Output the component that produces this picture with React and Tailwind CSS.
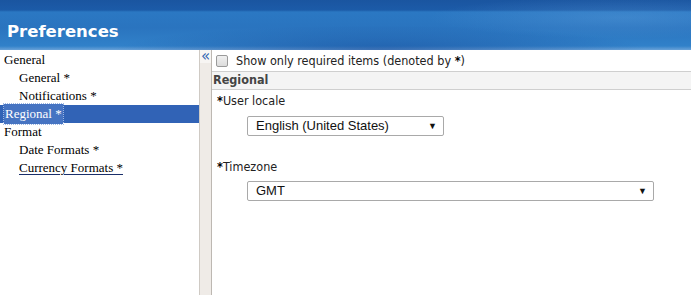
import React from 'react';

// Preferences page: header, navigation tree, splitter, form panel

const treeItems = [
  { label: 'General', level: 0 },
  { label: 'General *', level: 1 },
  { label: 'Notifications *', level: 1 },
  { label: 'Regional *', level: 0, selected: true },
  { label: 'Format', level: 0 },
  { label: 'Date Formats *', level: 1 },
  { label: 'Currency Formats *', level: 1, underline: true },
];

const Select = ({ value, width }) => (
  <div
    className={`flex items-center justify-between h-[20px] ${width} border border-[#a9a9a9] rounded-[2px] bg-white pl-[8px] pr-[6px] text-[13px] text-[#111] font-['Liberation_Sans',Arial,sans-serif]`}
  >
    <span>{value}</span>
    <span className="text-[9px] leading-none">▼</span>
  </div>
);

export default function App() {
  return (
    <div className="w-[691px] h-[295px] overflow-hidden flex flex-col bg-white">
      {/* Header */}
      <div className="relative h-[50px] shrink-0 flex items-end pb-[10px] pl-[7px] bg-[linear-gradient(to_bottom,#1a55a0_0%,#1c5ba8_20%,#2b78c3_24%,#2a74bf_55%,#3181c9_92%,#6aa2d8_100%)]">
        <div className="absolute inset-0 bg-[radial-gradient(ellipse_55%_70%_at_55%_100%,rgba(18,66,146,0.5),transparent_70%)]" />
        <div className="absolute inset-0 bg-[radial-gradient(ellipse_40%_60%_at_90%_35%,rgba(120,180,235,0.25),transparent_70%)]" />
        <h1 className="relative text-white font-bold text-[16.5px] leading-none font-['DejaVu_Sans',Verdana,sans-serif]">
          Preferences
        </h1>
      </div>

      <div className="flex flex-1 min-h-0">
        {/* Navigation tree */}
        <div className="w-[199px] shrink-0 pt-[1px] font-['Liberation_Serif','Times_New_Roman',serif] text-[13px] text-black">
          {treeItems.map((item) => (
            <div
              key={item.label}
              className={`h-[18px] flex items-center ${item.level ? 'pl-[19px]' : 'pl-[4px]'} ${
                item.selected ? 'bg-[#3163b6] text-white' : ''
              }`}
            >
              <span
                className={`${item.underline ? 'underline decoration-[#1a2f6a] underline-offset-[2px]' : ''} ${
                  item.selected ? 'bg-[#4674c2] outline outline-1 outline-dotted outline-[#9db7e3] px-[1px]' : ''
                }`}
              >
                {item.label}
              </span>
            </div>
          ))}
        </div>

        {/* Splitter */}
        <div className="w-[13px] shrink-0 flex flex-col border-l border-[#cfcac4] border-r border-r-[#bdb8b2] bg-[#efebe7]">
          <div className="h-[13px] flex items-center justify-center bg-[#f7f5f3] text-[#2f63b0] text-[15px] leading-none font-['DejaVu_Sans',sans-serif]">
            «
          </div>
        </div>

        {/* Form panel */}
        <div className="flex-1 flex flex-col font-['DejaVu_Sans_Condensed','DejaVu_Sans',sans-serif] text-[12.5px] text-[#222]">
          <label className="h-[21px] flex items-center gap-[8px] pl-[4px] pt-[1px]">
            <span className="w-[12px] h-[12px] rounded-[2px] border border-[#9a9a9a] bg-[linear-gradient(to_bottom,#f0f0f0,#dcdcdc)]" />
            <span>
              Show only required items (denoted by <b className="text-black">*</b>)
            </span>
          </label>

          <div className="h-[19px] flex items-center border-t border-b border-[#cfcfcf] bg-[#f4f4f4] pl-[1px] font-bold text-[#444]">
            Regional
          </div>

          <div className="flex flex-col pl-[5px] pt-[3px]">
            <div className="h-[16px] flex items-center">
              <b className="text-black">*</b>User locale
            </div>
            <div className="pl-[30px] pt-[7px]">
              <Select value="English (United States)" width="w-[197px]" />
            </div>

            <div className="h-[16px] flex items-center mt-[23px]">
              <b className="text-black">*</b>Timezone
            </div>
            <div className="pl-[30px] pt-[6px]">
              <Select value="GMT" width="w-[407px]" />
            </div>
          </div>
        </div>
      </div>
    </div>
  );
}
